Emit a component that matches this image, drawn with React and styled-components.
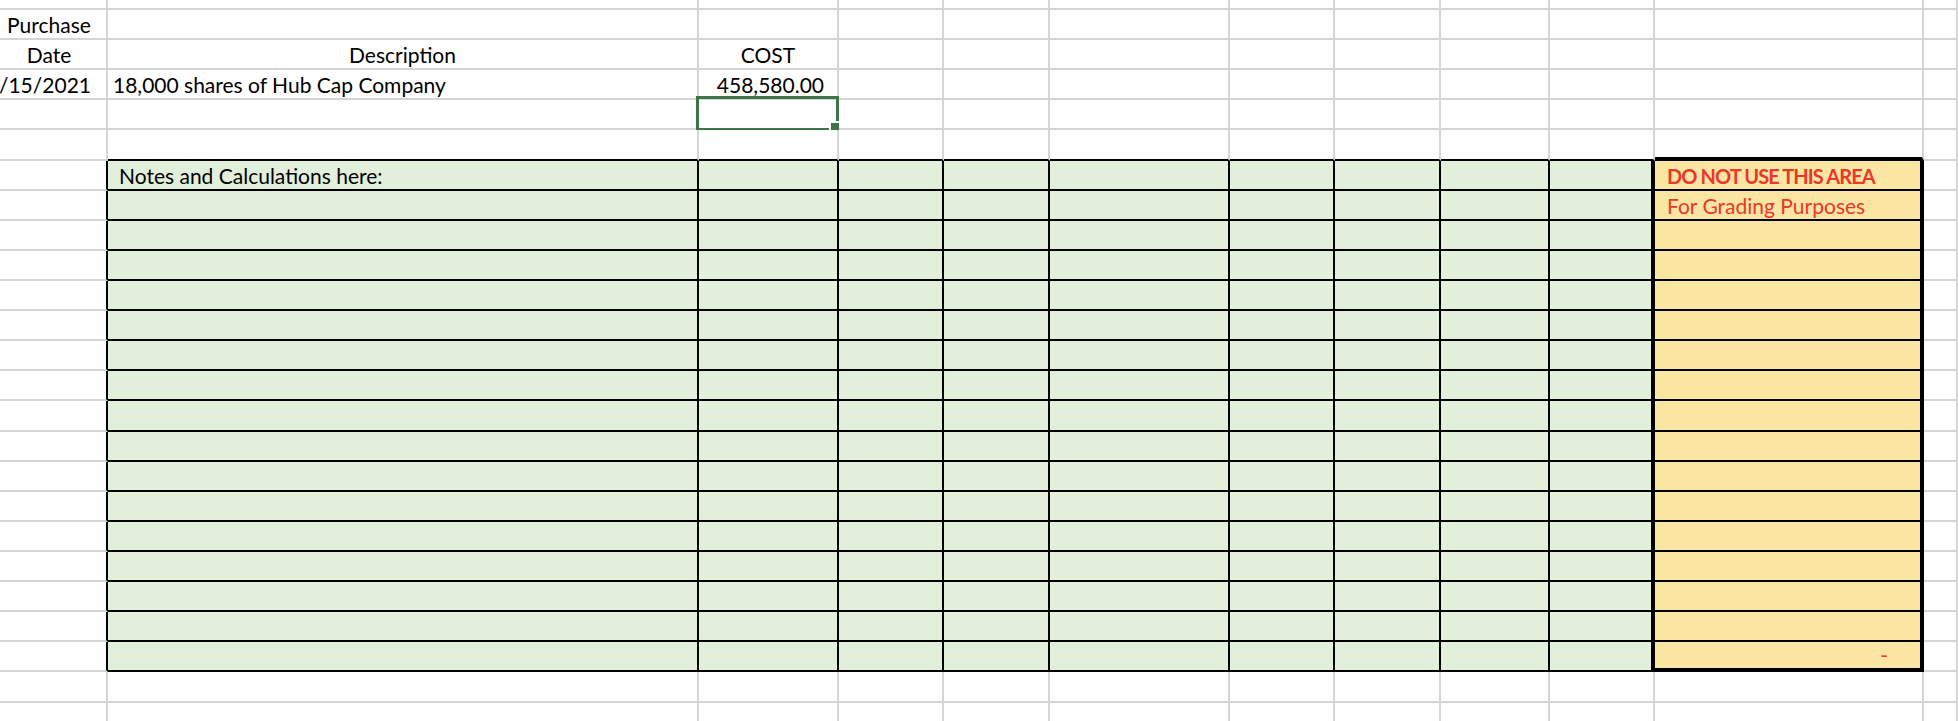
import styled, { createGlobalStyle } from "styled-components";

// column widths, the first one starts 8px off the left edge of the window
const COLS = [116, 591, 140, 105, 106, 180, 105, 106, 109, 105, 269];
const ROW_COUNT = 25;
const TABLE_TOP = 6;
const TABLE_BOTTOM = 22;
const YELLOW_COL = 10;

const EDGE = {
  grid: "2px solid #d5d5d5",
  line: "2px solid #000",
  thick: "4px solid #000",
};

const FILL = {
  green: "#e2efda",
  yellow: "#fae5a2",
};

const CONTENT = {
  "1-0": { text: "Purchase", align: "center" },
  "2-0": { text: "Date", align: "center" },
  "2-1": { text: "Description", align: "center" },
  "2-2": { text: "COST", align: "center" },
  "3-0": { text: "6/15/2021", align: "right", padRight: 15 },
  "3-1": { text: "18,000 shares of Hub Cap Company", padLeft: 5 },
  "3-2": { text: "458,580.00", align: "right", padRight: 13 },
  "4-2": { selected: true },
  "6-1": { text: "Notes and Calculations here:", padLeft: 11 },
  "6-10": { text: "DO NOT USE THIS AREA", padLeft: 12, red: true, bold: true },
  "7-10": { text: "For Grading Purposes", padLeft: 12, red: true },
  "22-10": { text: "-", align: "right", padRight: 32, red: true },
};

const zone = (r, c) => {
  if (r < TABLE_TOP || r > TABLE_BOTTOM) return null;
  if (c >= 1 && c < YELLOW_COL) return "green";
  if (c === YELLOW_COL) return "yellow";
  return null;
};

const edge = (a, b) => {
  if ((a === "yellow") !== (b === "yellow")) return "thick";
  if (a || b) return "line";
  return "grid";
};

const GlobalStyle = createGlobalStyle`
  html, body {
    margin: 0;
    padding: 0;
    overflow: hidden;
    background: #fff;
  }
  body {
    font-family: Lato, "Open Sans", sans-serif;
  }
`;

const Sheet = styled.div`
  display: grid;
  grid-template-columns: ${COLS.map((w) => w + "px").join(" ")} 1fr;
  grid-template-rows: 10px;
  grid-auto-rows: 30.12px;
  margin-left: -8px;
  width: calc(100% + 8px);
  height: 721px;
  overflow: hidden;
`;

const Cell = styled.div`
  position: relative;
  box-sizing: border-box;
  min-width: 0;
  display: flex;
  align-items: flex-end;
  justify-content: ${(p) =>
    p.$align === "center" ? "center" : p.$align === "right" ? "flex-end" : "flex-start"};
  padding: 0 ${(p) => p.$padRight}px 1px ${(p) => p.$padLeft}px;
  border-right: ${(p) => EDGE[p.$right]};
  border-bottom: ${(p) => EDGE[p.$bottom]};
  background: ${(p) => FILL[p.$fill] || "#fff"};
  color: ${(p) => (p.$red ? "#e9382c" : "#000")};
  font-size: ${(p) => (p.$bold ? 20 : 21)}px;
  line-height: 24px;
  font-weight: ${(p) => (p.$bold ? 700 : 400)};
  letter-spacing: ${(p) => (p.$bold ? "-0.9px" : "0")};
  white-space: nowrap;
`;

const Selection = styled.div`
  position: absolute;
  top: -4px;
  left: -3px;
  right: -2px;
  bottom: -3px;
  border: 3px solid #3d744b;
  pointer-events: none;
`;

const FillHandle = styled.span`
  position: absolute;
  right: -8px;
  bottom: -8px;
  width: 11px;
  height: 11px;
  background: #3d744b;
  border: 2px solid #fff;
`;

const App = () => {
  const cells = [];
  for (let r = 0; r < ROW_COUNT; r++) {
    for (let c = 0; c <= COLS.length; c++) {
      const info = CONTENT[`${r}-${c}`] || {};
      const here = zone(r, c);
      cells.push(
        <Cell
          key={`${r}-${c}`}
          $fill={here}
          $right={c === COLS.length ? "grid" : edge(here, zone(r, c + 1))}
          $bottom={edge(here, zone(r + 1, c))}
          $align={info.align}
          $padLeft={info.padLeft ?? 4}
          $padRight={info.padRight ?? 4}
          $red={info.red}
          $bold={info.bold}
        >
          {info.text}
          {info.selected && (
            <Selection>
              <FillHandle />
            </Selection>
          )}
        </Cell>
      );
    }
  }

  return (
    <>
      <GlobalStyle />
      <Sheet>{cells}</Sheet>
    </>
  );
};

export default App;
